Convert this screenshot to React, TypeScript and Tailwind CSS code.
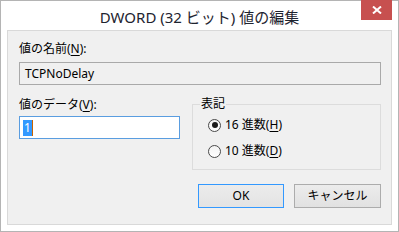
import React from 'react';

const font = { fontFamily: '"Noto Sans", "Noto Sans CJK JP", sans-serif' };

const Radio: React.FC<{ checked?: boolean; label: string; mnemonic: string }> = ({ checked, label, mnemonic }) => (
  <div className="flex items-center h-[16px]">
    <div className="w-[13px] h-[13px] rounded-full border border-[#4a4a4a] bg-gradient-to-b from-[#f2f2f2] to-white flex items-center justify-center">
      {checked && <div className="w-[6px] h-[6px] rounded-full bg-[#1a1a1a]" />}
    </div>
    <span className="ml-[4px] text-[12px] leading-[16px] text-black">
      {label}(<span className="underline underline-offset-2">{mnemonic}</span>)
    </span>
  </div>
);

export default function App() {
  return (
    <div className="w-[399px] h-[232px] bg-white border border-[#b4b4b4] flex flex-col px-[6px] pb-[6px]" style={font}>
      {/* Title bar */}
      <div className="relative h-[29px] flex items-center justify-center pt-[2px]">
        <span className="text-[15px] leading-[18px] text-[#1e2430]">DWORD (32 ビット) 値の編集</span>
        <div className="absolute right-0 top-[-1px] w-[31px] h-[20px] bg-[#c7504f] flex items-center justify-center">
          <svg width="10" height="8" viewBox="0 0 10 8">
            <path d="M1 0.5 L9 7.5 M9 0.5 L1 7.5" stroke="white" strokeWidth="2" />
          </svg>
        </div>
      </div>

      {/* Client area */}
      <div className="flex-1 border border-[#d9d9d9] bg-[#f0f0f0] pl-[11px] pr-[10px] pt-[10px] flex flex-col">
        <div className="text-[12px] leading-[16px] text-black">
          値の名前(<span className="underline underline-offset-2">N</span>):
        </div>
        <div className="mt-[5px] h-[23px] border border-[#a9a9a9] bg-[#f0f0f0] pl-[5px] flex items-center text-[12px] text-black">
          TCPNoDelay
        </div>

        <div className="mt-[11px] flex">
          <div className="w-[161px] pt-[1px]">
            <div className="text-[12px] leading-[16px] text-black">
              値のデータ(<span className="underline underline-offset-2">V</span>):
            </div>
            <div className="mt-[3px] h-[23px] border border-[#5a9de0] bg-white pl-[3px] flex items-center">
              <span className="bg-[#3399ff] text-white text-[12px] leading-[16px] px-[1px]">1</span>
              <span className="w-[1px] h-[16px] bg-[#c86400]" />
            </div>
          </div>
          <fieldset className="ml-[12px] flex-1 border border-[#dcdcdc] h-[74px] m-0 p-0">
            <legend className="ml-[7px] px-[1px] text-[12px] leading-[16px] text-black">表記</legend>
            <div className="flex flex-col gap-[10px] pl-[15px] pt-[5px]">
              <Radio checked label="16 進数" mnemonic="H" />
              <Radio label="10 進数" mnemonic="D" />
            </div>
          </fieldset>
        </div>

        <div className="mt-[14px] flex justify-end gap-[10px]">
          <button className="w-[86px] h-[24px] border border-[#3399ff] bg-gradient-to-b from-[#ececec] to-[#e3e3e3] text-[12px] text-black">
            OK
          </button>
          <button className="w-[87px] h-[24px] border border-[#acacac] bg-gradient-to-b from-[#ececec] to-[#e1e1e1] text-[12px] text-black">
            キャンセル
          </button>
        </div>
      </div>
    </div>
  );
}
